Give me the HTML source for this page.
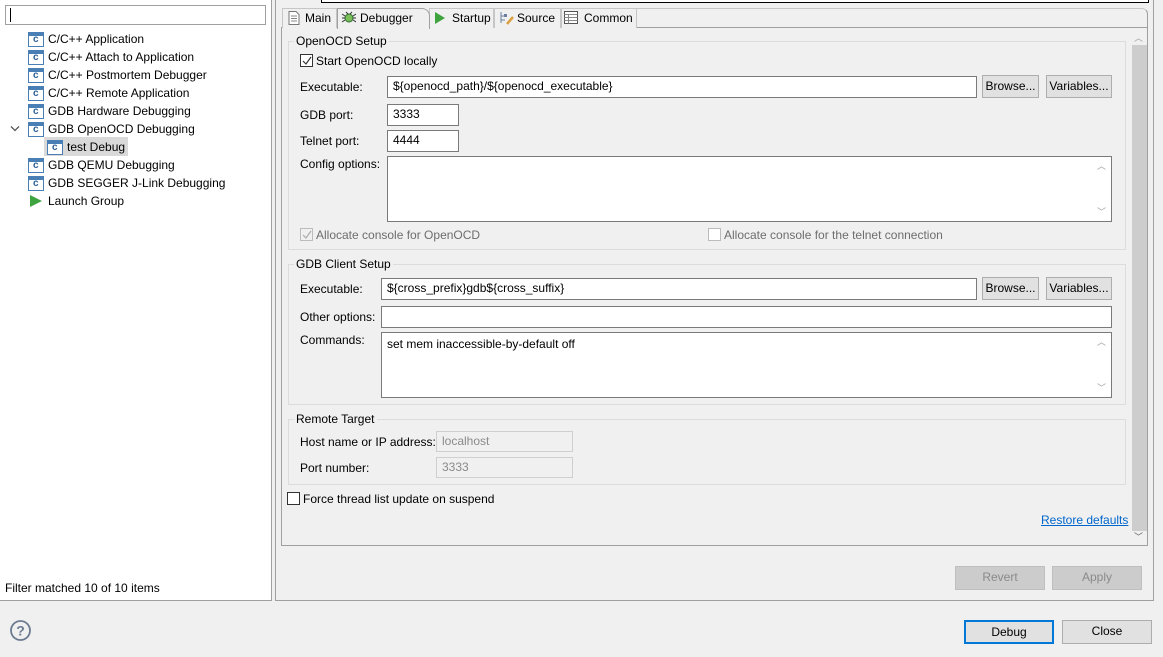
<!DOCTYPE html>
<html><head><meta charset="utf-8"><style>
*{box-sizing:border-box;margin:0;padding:0}
body{width:1163px;height:657px;background:#f0f0f0;font-family:"Liberation Sans",sans-serif;font-size:12px;color:#000;position:relative;overflow:hidden}
.a{position:absolute}
.t{position:absolute;white-space:nowrap;line-height:14px}
.in{position:absolute;background:#fff;border:1px solid #7a7a7a;padding:2px 5px;line-height:14px;white-space:nowrap}
.dis{background:#f0f0f0;border-color:#cfcfcf;color:#8a8a8a}
.btn{position:absolute;background:#e1e1e1;border:1px solid #adadad;text-align:center;line-height:21px}
.grp{position:absolute;border:1px solid #dcdcdc}
.gt{position:absolute;background:#f0f0f0;padding:0 2px;line-height:14px;white-space:nowrap}
.cb{position:absolute;width:13px;height:13px;border:1px solid #333;background:#fff}
.ic{position:absolute;width:16px;height:15px;border:1px solid #4a7fb5;background:#fff}
.ic:before{content:"";position:absolute;left:0;top:0;right:0;height:3px;background:#4a7fb5}
.ic:after{content:"c";position:absolute;left:4px;top:2px;font-size:10px;font-weight:bold;color:#2c5f94;line-height:10px}
.tab{position:absolute;top:8px;height:20px;border:1px solid #c6c6c6;border-bottom:none;background:#f0f0f0;line-height:18px;padding-left:22px}
.sa{position:absolute;font-size:9px;color:#a0a0a0}
</style></head><body>
<!-- left panel -->
<div class="a" style="left:0;top:0;width:272px;height:601px;background:#fff;border-right:1px solid #a0a0a0;border-bottom:1px solid #a0a0a0"></div>
<div class="a" style="left:5px;top:5px;width:261px;height:20px;border:1px solid #a0a0a0;background:#fff"></div>
<div class="a" style="left:10px;top:8px;width:1px;height:14px;background:#000"></div>
<div class="a" style="left:44px;top:137px;width:84px;height:19px;background:#d9d9d9"></div>
<svg class="a" style="left:10px;top:125px" width="10" height="8"><path d="M1 1.5 L5 5.5 L9 1.5" stroke="#555" stroke-width="1.3" fill="none"/></svg>
<div class="ic" style="left:28px;top:32px"></div><div class="t" style="left:48px;top:32px">C/C++ Application</div>
<div class="ic" style="left:28px;top:50px"></div><div class="t" style="left:48px;top:50px">C/C++ Attach to Application</div>
<div class="ic" style="left:28px;top:68px"></div><div class="t" style="left:48px;top:68px">C/C++ Postmortem Debugger</div>
<div class="ic" style="left:28px;top:86px"></div><div class="t" style="left:48px;top:86px">C/C++ Remote Application</div>
<div class="ic" style="left:28px;top:104px"></div><div class="t" style="left:48px;top:104px">GDB Hardware Debugging</div>
<div class="ic" style="left:28px;top:122px"></div><div class="t" style="left:48px;top:122px">GDB OpenOCD Debugging</div>
<div class="ic" style="left:47px;top:140px"></div><div class="t" style="left:67px;top:140px">test Debug</div>
<div class="ic" style="left:28px;top:158px"></div><div class="t" style="left:48px;top:158px">GDB QEMU Debugging</div>
<div class="ic" style="left:28px;top:176px"></div><div class="t" style="left:48px;top:176px">GDB SEGGER J-Link Debugging</div>
<svg class="a" style="left:28px;top:194px" width="16" height="14"><path d="M2 1 L14 7 L2 13Z" fill="#3fa33f"/></svg>
<div class="t" style="left:48px;top:194px">Launch Group</div>
<div class="t" style="left:5px;top:581px">Filter matched 10 of 10 items</div>
<!-- right container -->
<div class="a" style="left:275px;top:-2px;width:879px;height:603px;border:1px solid #a0a0a0"></div>
<div class="a" style="left:321px;top:-3px;width:828px;height:6px;border:1px solid #000;background:#fff"></div>
<!-- tabs -->
<div class="a" style="left:281px;top:27px;width:867px;height:519px;border:1px solid #a0a0a0;border-right-color:#a0a0a0"></div>
<div class="a" style="left:636px;top:8px;width:512px;height:20px;border-top:1px solid #c6c6c6;border-right:1px solid #a0a0a0;border-top-right-radius:6px"></div>
<div class="tab" style="left:282px;width:55px">Main</div>
<div class="tab" style="left:429px;width:65px">Startup</div>
<div class="tab" style="left:494px;width:67px">Source</div>
<div class="tab" style="left:561px;width:76px">Common</div>
<div class="tab" style="left:337px;width:93px;height:21px;border-color:#a0a0a0;border-top-right-radius:8px;background:#f0f0f0">Debugger</div>
<svg class="a" style="left:288px;top:11px" width="12" height="14"><path d="M1 .5H8L11 3.5V13.5H1Z" fill="#fff" stroke="#777"/><path d="M3 5H9M3 7.5H9M3 10H9" stroke="#888"/></svg>
<svg class="a" style="left:341px;top:10px" width="15" height="15"><circle cx="8" cy="8" r="4" fill="#7bbf5a" stroke="#2d6b2d"/><path d="M1 4L4 6M1 8H4M1 12L4 10M15 4L12 6M15 8H12M15 12L12 10M5 2L7 4M11 2L9 4" stroke="#333"/></svg>
<svg class="a" style="left:434px;top:12px" width="12" height="12"><path d="M1 0L11 6L1 12Z" fill="#3fa33f"/></svg>
<svg class="a" style="left:499px;top:11px" width="16" height="15"><path d="M2 1V12M2 5H6M2 9H6" stroke="#6a7fa0"/><rect x="5" y="3" width="3" height="3" fill="#6a7fa0"/><path d="M8 13L14 6" stroke="#d9a040" stroke-width="2.5"/></svg>
<svg class="a" style="left:564px;top:11px" width="14" height="13"><rect x=".5" y=".5" width="13" height="12" fill="#fff" stroke="#555"/><path d="M.5 3.5H13.5M4.5 3.5V12.5M.5 6.5H13.5M.5 9.5H13.5" stroke="#888"/></svg>
<!-- scrollbar -->
<div class="a" style="left:1131px;top:30px;width:16px;height:514px;background:#f0f0f0"></div>
<div class="a" style="left:1132px;top:45px;width:15px;height:486px;background:#cdcdcd"></div>
<div class="sa" style="left:1134px;top:31px">︿</div>
<div class="sa" style="left:1134px;top:530px;color:#606060">﹀</div>
<!-- OpenOCD group -->
<div class="grp" style="left:288px;top:41px;width:838px;height:209px"></div>
<div class="gt" style="left:294px;top:34px">OpenOCD Setup</div>
<div class="cb" style="left:300px;top:54px"></div><svg class="a" style="left:301px;top:55px" width="12" height="12"><path d="M2 6L5 9L10 2" stroke="#333" fill="none" stroke-width="1.2"/></svg>
<div class="t" style="left:316px;top:54px">Start OpenOCD locally</div>
<div class="t" style="left:300px;top:80px">Executable:</div>
<div class="in" style="left:387px;top:76px;width:590px;height:22px">${openocd_path}/${openocd_executable}</div>
<div class="btn" style="left:982px;top:75px;width:57px;height:23px">Browse...</div>
<div class="btn" style="left:1046px;top:75px;width:66px;height:23px">Variables...</div>
<div class="t" style="left:300px;top:108px">GDB port:</div>
<div class="in" style="left:387px;top:104px;width:72px;height:22px">3333</div>
<div class="t" style="left:300px;top:134px">Telnet port:</div>
<div class="in" style="left:387px;top:130px;width:72px;height:22px">4444</div>
<div class="t" style="left:300px;top:157px">Config options:</div>
<div class="in" style="left:387px;top:156px;width:725px;height:66px"></div>
<div class="sa" style="left:1097px;top:159px">︿</div><div class="sa" style="left:1097px;top:205px">﹀</div>
<div class="cb" style="left:300px;top:228px;border-color:#bcbcbc;background:#f0f0f0"></div><svg class="a" style="left:301px;top:229px" width="12" height="12"><path d="M2 6L5 9L10 2" stroke="#aaa" fill="none" stroke-width="1.2"/></svg>
<div class="t" style="left:316px;top:228px;color:#6d6d6d">Allocate console for OpenOCD</div>
<div class="cb" style="left:708px;top:228px;border-color:#bcbcbc"></div>
<div class="t" style="left:724px;top:228px;color:#6d6d6d">Allocate console for the telnet connection</div>
<!-- GDB client -->
<div class="grp" style="left:288px;top:264px;width:838px;height:141px"></div>
<div class="gt" style="left:294px;top:257px">GDB Client Setup</div>
<div class="t" style="left:300px;top:282px">Executable:</div>
<div class="in" style="left:381px;top:278px;width:596px;height:22px">${cross_prefix}gdb${cross_suffix}</div>
<div class="btn" style="left:982px;top:277px;width:57px;height:23px">Browse...</div>
<div class="btn" style="left:1046px;top:277px;width:66px;height:23px">Variables...</div>
<div class="t" style="left:300px;top:310px">Other options:</div>
<div class="in" style="left:381px;top:306px;width:731px;height:22px"></div>
<div class="t" style="left:300px;top:333px">Commands:</div>
<div class="in" style="left:381px;top:332px;width:731px;height:66px;padding-top:4px">set mem inaccessible-by-default off</div>
<div class="sa" style="left:1097px;top:335px">︿</div><div class="sa" style="left:1097px;top:381px">﹀</div>
<!-- remote -->
<div class="grp" style="left:288px;top:419px;width:838px;height:66px"></div>
<div class="gt" style="left:294px;top:412px">Remote Target</div>
<div class="t" style="left:300px;top:435px">Host name or IP address:</div>
<div class="in dis" style="left:436px;top:431px;width:137px;height:21px">localhost</div>
<div class="t" style="left:300px;top:461px">Port number:</div>
<div class="in dis" style="left:436px;top:457px;width:137px;height:21px">3333</div>
<div class="cb" style="left:287px;top:492px"></div>
<div class="t" style="left:303px;top:492px">Force thread list update on suspend</div>
<div class="t" style="left:1041px;top:513px;color:#0066cc;text-decoration:underline">Restore defaults</div>
<!-- bottom buttons -->
<div class="btn" style="left:955px;top:566px;width:90px;height:24px;background:#cccccc;border-color:#bfbfbf;color:#8a8a8a">Revert</div>
<div class="btn" style="left:1052px;top:566px;width:90px;height:24px;background:#cccccc;border-color:#bfbfbf;color:#8a8a8a">Apply</div>
<div class="btn" style="left:964px;top:620px;width:90px;height:24px;border:2px solid #0078d7;line-height:20px">Debug</div>
<div class="btn" style="left:1062px;top:620px;width:90px;height:24px">Close</div>
<svg class="a" style="left:9px;top:619px" width="23" height="23"><circle cx="11.5" cy="11.5" r="9.5" fill="none" stroke="#6b7a90" stroke-width="1.8"/><text x="11.5" y="16.5" text-anchor="middle" font-family="Liberation Sans" font-weight="bold" font-size="14" fill="#6b7a90">?</text></svg>
</body></html>
